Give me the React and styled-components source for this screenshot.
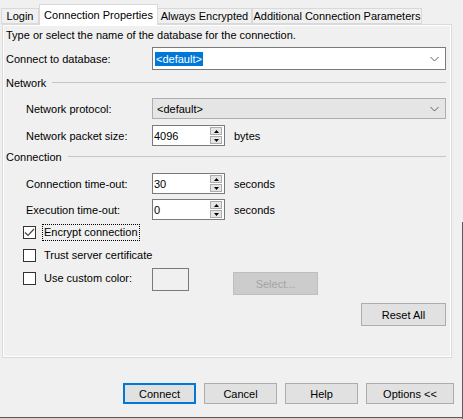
import React from 'react'
import styled, { createGlobalStyle } from 'styled-components'

const GlobalStyle = createGlobalStyle`
  html, body {
    margin: 0;
    padding: 0;
    background: #f0f0f0;
  }
  * { box-sizing: border-box; }
`;

const Window = styled.div`
  width: 463px;
  height: 419px;
  background: #f0f0f0;
  font-family: 'Liberation Sans', Arial, sans-serif;
  font-size: 11px;
  color: #000;
  display: flex;
  flex-direction: column;
  overflow: hidden;
  position: relative;
`;

const TabStrip = styled.div`
  height: 24px;
  display: flex;
  align-items: flex-end;
  padding-left: 1px;
  position: relative;
  z-index: 1;
`;

const Tab = styled.div`
  width: ${p => p.$w}px;
  height: ${p => (p.$active ? 21 : 16)}px;
  margin-bottom: ${p => (p.$active ? -1 : 0)}px;
  background: ${p => (p.$active ? '#fff' : '#f0f0f0')};
  border: 1px solid #d9d9d9;
  border-bottom: ${p => (p.$active ? 'none' : '1px solid #d9d9d9')};
  border-left: ${p => (p.$noLeft ? 'none' : '1px solid #d9d9d9')};
  display: flex;
  align-items: ${p => (p.$active ? 'flex-start' : 'center')};
  padding-top: ${p => (p.$active ? 3 : 0)}px;
  justify-content: center;
  white-space: nowrap;
  line-height: 14px;
`;

const Panel = styled.div`
  margin-left: 2px;
  width: 450px;
  height: 334px;
  border: 1px solid #dadada;
  box-shadow: inset 1px 1px 0 #fff, inset -1px -1px 0 #fff;
  padding: 3px 5px 0 3px;
  display: flex;
  flex-direction: column;
`;

const Description = styled.div`
  line-height: 14px;
  height: 14px;
`;

const Row = styled.div`
  display: grid;
  grid-template-columns: 146px 1fr;
  align-items: center;
  margin-top: ${p => p.$mt}px;
  height: ${p => p.$h}px;
`;

const Label = styled.div`
  padding-left: ${p => p.$indent || 0}px;
  line-height: 14px;
  white-space: nowrap;
`;

const GroupHeader = styled.div`
  display: flex;
  align-items: center;
  gap: 6px;
  margin-top: ${p => p.$mt}px;
  height: 14px;
  line-height: 14px;

  &::after {
    content: '';
    flex: 1;
    height: 1px;
    background: #c6c6c6;
    margin-top: -2px;
  }
`;

const Combo = styled.div`
  height: ${p => p.$h}px;
  border: 1px solid ${p => (p.$disabled ? '#adadad' : '#7a7a7a')};
  background: ${p => (p.$disabled ? '#e5e5e5' : '#fff')};
  display: flex;
  align-items: center;
  justify-content: space-between;
  padding: 0 6px 0 2px;
`;

const SelectedText = styled.span`
  background: #0078d7;
  color: #fff;
  line-height: 14px;
  padding: 0 1px;
`;

const PlainText = styled.span`
  padding-left: ${p => p.$pl || 0}px;
  line-height: 14px;
`;

const Chevron = () => (
  <svg width="9" height="6" viewBox="0 0 9 6">
    <polyline points="0.5,1 4.5,5 8.5,1" fill="none" stroke="#606060" strokeWidth="1" />
  </svg>
);

const SpinGroup = styled.div`
  display: flex;
  align-items: center;
  gap: 9px;
`;

const Spinner = styled.div`
  width: 73px;
  height: 21px;
  border: 1px solid #7a7a7a;
  background: #fff;
  display: flex;
  align-items: center;
  justify-content: space-between;
  padding: 0 2px 0 1px;
`;

const SpinValue = styled.span`
  line-height: 14px;
  padding-top: 1px;
`;

const SpinButtons = styled.div`
  width: 12px;
  height: 17px;
  display: flex;
  flex-direction: column;
  gap: 1px;
`;

const SpinButton = styled.div`
  flex: 1;
  background: #e5e5e5;
  border: 1px solid #acacac;
  display: flex;
  align-items: center;
  justify-content: center;
`;

const Arrow = ({ down }) => (
  <svg width="5" height="3" viewBox="0 0 5 3">
    <polygon points={down ? '0,0 5,0 2.5,3' : '2.5,0 5,3 0,3'} fill="#000" />
  </svg>
);

const Unit = styled.span`
  line-height: 14px;
`;

const CheckRow = styled.div`
  display: flex;
  align-items: ${p => (p.$top ? 'flex-start' : 'center')};
  margin-top: ${p => p.$mt}px;
  height: ${p => p.$h}px;
  padding-left: 17px;
`;

const CheckArea = styled.div`
  width: 129px;
  display: flex;
  align-items: center;
  gap: 4px;
  margin-top: ${p => p.$mt || 0}px;
`;

const Box = styled.div`
  width: 13px;
  height: 13px;
  border: 1px solid #333;
  background: #fff;
  display: flex;
  align-items: center;
  justify-content: center;
  flex-shrink: 0;
`;

const CheckLabel = styled.span`
  line-height: 15px;
  padding: 0 1px;
  margin-left: 2px;
  border: 1px ${p => (p.$focus ? 'dotted #000' : 'solid transparent')};
  white-space: nowrap;
`;

const ColorSwatch = styled.div`
  width: 37px;
  height: 23px;
  border: 1px solid #7a7a7a;
  background: #f0f0f0;
`;

const Button = styled.div`
  width: ${p => p.$w}px;
  height: ${p => p.$h || 21}px;
  border: ${p => (p.$default ? '2px solid #0078d7' : '1px solid #adadad')};
  background: ${p => (p.$disabled ? '#cccccc' : '#e1e1e1')};
  color: ${p => (p.$disabled ? '#a3a3a3' : '#000')};
  border-color: ${p => (p.$disabled ? '#bfbfbf' : p.$default ? '#0078d7' : '#adadad')};
  display: flex;
  align-items: center;
  justify-content: center;
  line-height: 14px;
  margin-left: ${p => p.$ml || 0}px;
  margin-top: ${p => p.$mt || 0}px;
`;

const ResetRow = styled.div`
  display: flex;
  justify-content: flex-end;
  margin-top: 8px;
`;

const Footer = styled.div`
  display: flex;
  justify-content: flex-end;
  gap: 8px;
  padding: 25px 9px 0 0;
`;

const BottomEdge = styled.div`
  margin-top: auto;
  height: 2px;
  border-top: 1px solid #5a5a5a;
  background: #d0d0d0;
`;

const RightEdge = styled.div`
  position: absolute;
  right: 0;
  top: 222px;
  bottom: 0;
  width: 1px;
  background: #5c5c5c;
`;

const Check = () => (
  <svg width="11" height="9" viewBox="0 0 11 9">
    <polyline points="1,4.5 4,7.5 10,1" fill="none" stroke="#444" strokeWidth="1.2" />
  </svg>
);

const SpinBox = ({ value, unit }) => (
  <SpinGroup>
    <Spinner>
      <SpinValue>{value}</SpinValue>
      <SpinButtons>
        <SpinButton><Arrow /></SpinButton>
        <SpinButton><Arrow down /></SpinButton>
      </SpinButtons>
    </Spinner>
    <Unit>{unit}</Unit>
  </SpinGroup>
);

const tabs = [
  { name: 'Login', w: 38 },
  { name: 'Connection Properties', w: 119, active: true },
  { name: 'Always Encrypted', w: 94 },
  { name: 'Additional Connection Parameters', w: 170 },
];

export default function App() {
  return (
    <Window>
      <GlobalStyle />
      <TabStrip>
        {tabs.map((t, i) => (
          <Tab key={t.name} $w={t.w} $active={t.active} $noLeft={i === 2}>
            {t.name}
          </Tab>
        ))}
      </TabStrip>
      <Panel>
        <Description>Type or select the name of the database for the connection.</Description>
        <Row $mt={5} $h={23}>
          <Label>Connect to database:</Label>
          <Combo $h={23}>
            <SelectedText>&lt;default&gt;</SelectedText>
            <Chevron />
          </Combo>
        </Row>

        <GroupHeader $mt={6}>Network</GroupHeader>
        <Row $mt={8} $h={21}>
          <Label $indent={20}>Network protocol:</Label>
          <Combo $h={21} $disabled>
            <PlainText $pl={2}>&lt;default&gt;</PlainText>
            <Chevron />
          </Combo>
        </Row>
        <Row $mt={6} $h={21}>
          <Label $indent={20}>Network packet size:</Label>
          <SpinBox value="4096" unit="bytes" />
        </Row>

        <GroupHeader $mt={4}>Connection</GroupHeader>
        <Row $mt={9} $h={21}>
          <Label $indent={20}>Connection time-out:</Label>
          <SpinBox value="30" unit="seconds" />
        </Row>
        <Row $mt={5} $h={21}>
          <Label $indent={20}>Execution time-out:</Label>
          <SpinBox value="0" unit="seconds" />
        </Row>

        <CheckRow $mt={4} $h={17}>
          <CheckArea>
            <Box><Check /></Box>
            <CheckLabel $focus>Encrypt connection</CheckLabel>
          </CheckArea>
        </CheckRow>
        <CheckRow $mt={6} $h={17}>
          <CheckArea>
            <Box />
            <CheckLabel>Trust server certificate</CheckLabel>
          </CheckArea>
        </CheckRow>
        <CheckRow $mt={4} $h={27} $top>
          <CheckArea $mt={2}>
            <Box />
            <CheckLabel>Use custom color:</CheckLabel>
          </CheckArea>
          <ColorSwatch />
          <Button $w={85} $h={23} $ml={44} $mt={4} $disabled>Select...</Button>
        </CheckRow>

        <ResetRow>
          <Button $w={85} $h={23}>Reset All</Button>
        </ResetRow>
      </Panel>
      <Footer>
        <Button $w={73} $default>Connect</Button>
        <Button $w={73}>Cancel</Button>
        <Button $w={73}>Help</Button>
        <Button $w={88}>Options &lt;&lt;</Button>
      </Footer>
      <BottomEdge />
      <RightEdge />
    </Window>
  )
}
